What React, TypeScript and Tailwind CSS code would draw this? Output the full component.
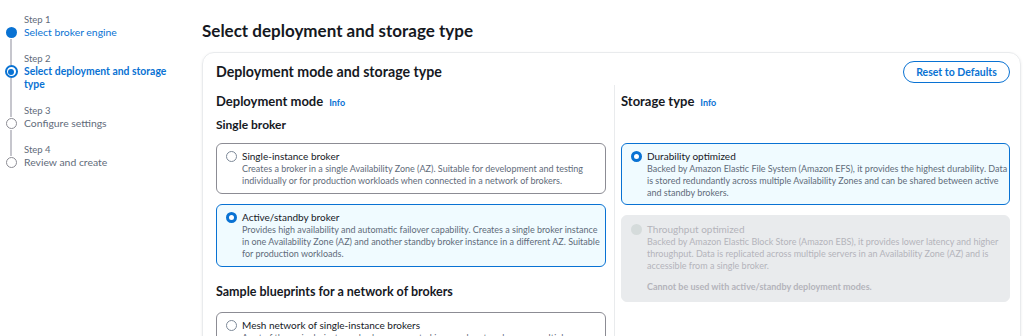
import React from "react";

const font = { fontFamily: 'Lato, "Open Sans", sans-serif' };

function Step({
  n,
  title,
  state,
  first,
  last,
}: {
  n: number;
  title: React.ReactNode;
  state: "done" | "current" | "todo";
  first?: boolean;
  last?: boolean;
}) {
  return (
    <div className="flex">
      <div className="w-[12px] flex flex-col items-center">
        <div className={`w-[2px] h-[13px] ${first ? "bg-transparent" : "bg-[#c6c6cd]"}`} />
        <div className="h-[13px] flex items-center justify-center">
          {state === "done" && <div className="w-[11px] h-[11px] rounded-full bg-[#0972d3]" />}
          {state === "current" && (
            <div className="w-[13px] h-[13px] rounded-full border-[2px] border-[#0972d3] flex items-center justify-center">
              <div className="w-[6px] h-[6px] rounded-full bg-[#0972d3]" />
            </div>
          )}
          {state === "todo" && (
            <div className="w-[11px] h-[11px] rounded-full border-[1.5px] border-[#8c8c94] bg-white" />
          )}
        </div>
        <div className={`w-[2px] flex-1 ${last ? "bg-transparent" : "bg-[#c6c6cd]"}`} />
      </div>
      <div className="pl-[7px] pb-[13px]">
        <div className="text-[9.5px] leading-[13px] text-[#5f6b7a]">Step {n}</div>
        <div
          className={`text-[10.4px] leading-[13px] ${
            state === "current"
              ? "font-bold text-[#0972d3]"
              : state === "done"
              ? "text-[#0972d3]"
              : "text-[#5f6b7a]"
          }`}
        >
          {title}
        </div>
      </div>
    </div>
  );
}

function Radio({ checked, disabled }: { checked?: boolean; disabled?: boolean }) {
  if (disabled)
    return <div className="w-[11px] h-[11px] rounded-full bg-[#d5dbdb] shrink-0" />;
  if (checked)
    return <div className="w-[11px] h-[11px] rounded-full border-[3px] border-[#0972d3] bg-white shrink-0" />;
  return <div className="w-[11px] h-[11px] rounded-full border-[1.5px] border-[#7d8998] bg-white shrink-0" />;
}

function Option({
  title,
  lines,
  checked,
  disabled,
  extra,
  className = "",
}: {
  title: string;
  lines: string[];
  checked?: boolean;
  disabled?: boolean;
  extra?: React.ReactNode;
  className?: string;
}) {
  const box = disabled
    ? "bg-[#e9ebed] border-[#e9ebed]"
    : checked
    ? "bg-[#f0fbff] border-[#0972d3]"
    : "bg-white border-[#8c8c94]";
  return (
    <div className={`rounded-[6px] border ${box} pl-[9px] pr-[10px] ${className}`}>
      <div className="flex items-center gap-[5px] h-[14px]">
        <Radio checked={checked} disabled={disabled} />
        <div className={`text-[10px] leading-[14px] ${disabled ? "text-[#b4b4bb]" : "text-[#16191f]"}`}>
          {title}
        </div>
      </div>
      <div
        className={`pl-[16px] text-[9px] leading-[12px] whitespace-nowrap ${
          disabled ? "text-[#b4b4bb]" : "text-[#5f6b7a]"
        }`}
      >
        {lines.map((l, i) => (
          <div key={i}>{l}</div>
        ))}
        {extra}
      </div>
    </div>
  );
}

function Info() {
  return <span className="ml-[6px] text-[9px] font-bold text-[#0972d3]">Info</span>;
}

export default function App() {
  return (
    <div className="w-[1024px] h-[336px] overflow-hidden bg-white flex text-[#16191f]" style={font}>
      <nav className="w-[202px] shrink-0 pt-[13px] pl-[5px]">
        <Step n={1} title="Select broker engine" state="done" first />
        <Step
          n={2}
          title={
            <>
              Select deployment and storage
              <br />
              type
            </>
          }
          state="current"
        />
        <Step n={3} title="Configure settings" state="todo" />
        <Step n={4} title="Review and create" state="todo" last />
      </nav>
      <main className="flex-1 min-w-0 pt-[19px] pr-[3px]">
        <h1 className="text-[17px] leading-[24px] font-bold text-[#16191f]">
          Select deployment and storage type
        </h1>
        <section className="mt-[9px] border border-[#e9ebed] rounded-[12px] shadow-[0_1px_3px_rgba(0,7,22,0.08)] h-[400px]">
          <div className="flex items-center justify-between pl-[13px] pr-[10px] pt-[8px]">
            <h2 className="text-[14.2px] leading-[22px] font-bold">Deployment mode and storage type</h2>
            <button className="h-[22px] w-[107px] rounded-full border-[1.5px] border-[#0972d3] text-[#0972d3] text-[10.5px] font-bold leading-none">
              Reset to Defaults
            </button>
          </div>
          <div className="flex mt-[2px]">
            <div className="w-[411px] shrink-0 pl-[13px] pr-[8px] pt-[7px]">
              <div className="text-[13px] leading-[18px] font-bold flex items-baseline">
                Deployment mode
                <Info />
              </div>
              <div className="mt-[5px] text-[12px] leading-[16px] font-bold">Single broker</div>
              <Option
                className="mt-[10px] pt-[5px] pb-[6px]"
                title="Single-instance broker"
                lines={[
                  "Creates a broker in a single Availability Zone (AZ). Suitable for development and testing",
                  "individually or for production workloads when connected in a network of brokers.",
                ]}
              />
              <Option
                className="mt-[10px] pt-[5px] pb-[6px]"
                checked
                title="Active/standby broker"
                lines={[
                  "Provides high availability and automatic failover capability. Creates a single broker instance",
                  "in one Availability Zone (AZ) and another standby broker instance in a different AZ. Suitable",
                  "for production workloads.",
                ]}
              />
              <div className="mt-[17px] text-[12.5px] leading-[16px] font-bold">
                Sample blueprints for a network of brokers
              </div>
              <Option
                className="mt-[12px] pt-[5px] pb-[6px]"
                title="Mesh network of single-instance brokers"
                lines={[
                  "A set of three single-instance brokers connected in a mesh network across multiple",
                  "Availability Zones.",
                ]}
              />
            </div>
            <div className="flex-1 min-w-0 border-l border-[#e9ebed] pl-[6px] pr-[10px] pt-[7px]">
              <div className="text-[13px] leading-[18px] font-bold flex items-baseline">
                Storage type
                <Info />
              </div>
              <Option
                className="mt-[31px] pt-[5px] pb-[5px]"
                checked
                title="Durability optimized"
                lines={[
                  "Backed by Amazon Elastic File System (Amazon EFS), it provides the highest durability. Data",
                  "is stored redundantly across multiple Availability Zones and can be shared between active",
                  "and standby brokers.",
                ]}
              />
              <Option
                className="mt-[10px] pt-[6px] pb-[8px]"
                disabled
                title="Throughput optimized"
                lines={[
                  "Backed by Amazon Elastic Block Store (Amazon EBS), it provides lower latency and higher",
                  "throughput. Data is replicated across multiple servers in an Availability Zone (AZ) and is",
                  "accessible from a single broker.",
                ]}
                extra={<div className="mt-[9px] font-bold">Cannot be used with active/standby deployment modes.</div>}
              />
            </div>
          </div>
        </section>
      </main>
    </div>
  );
}
